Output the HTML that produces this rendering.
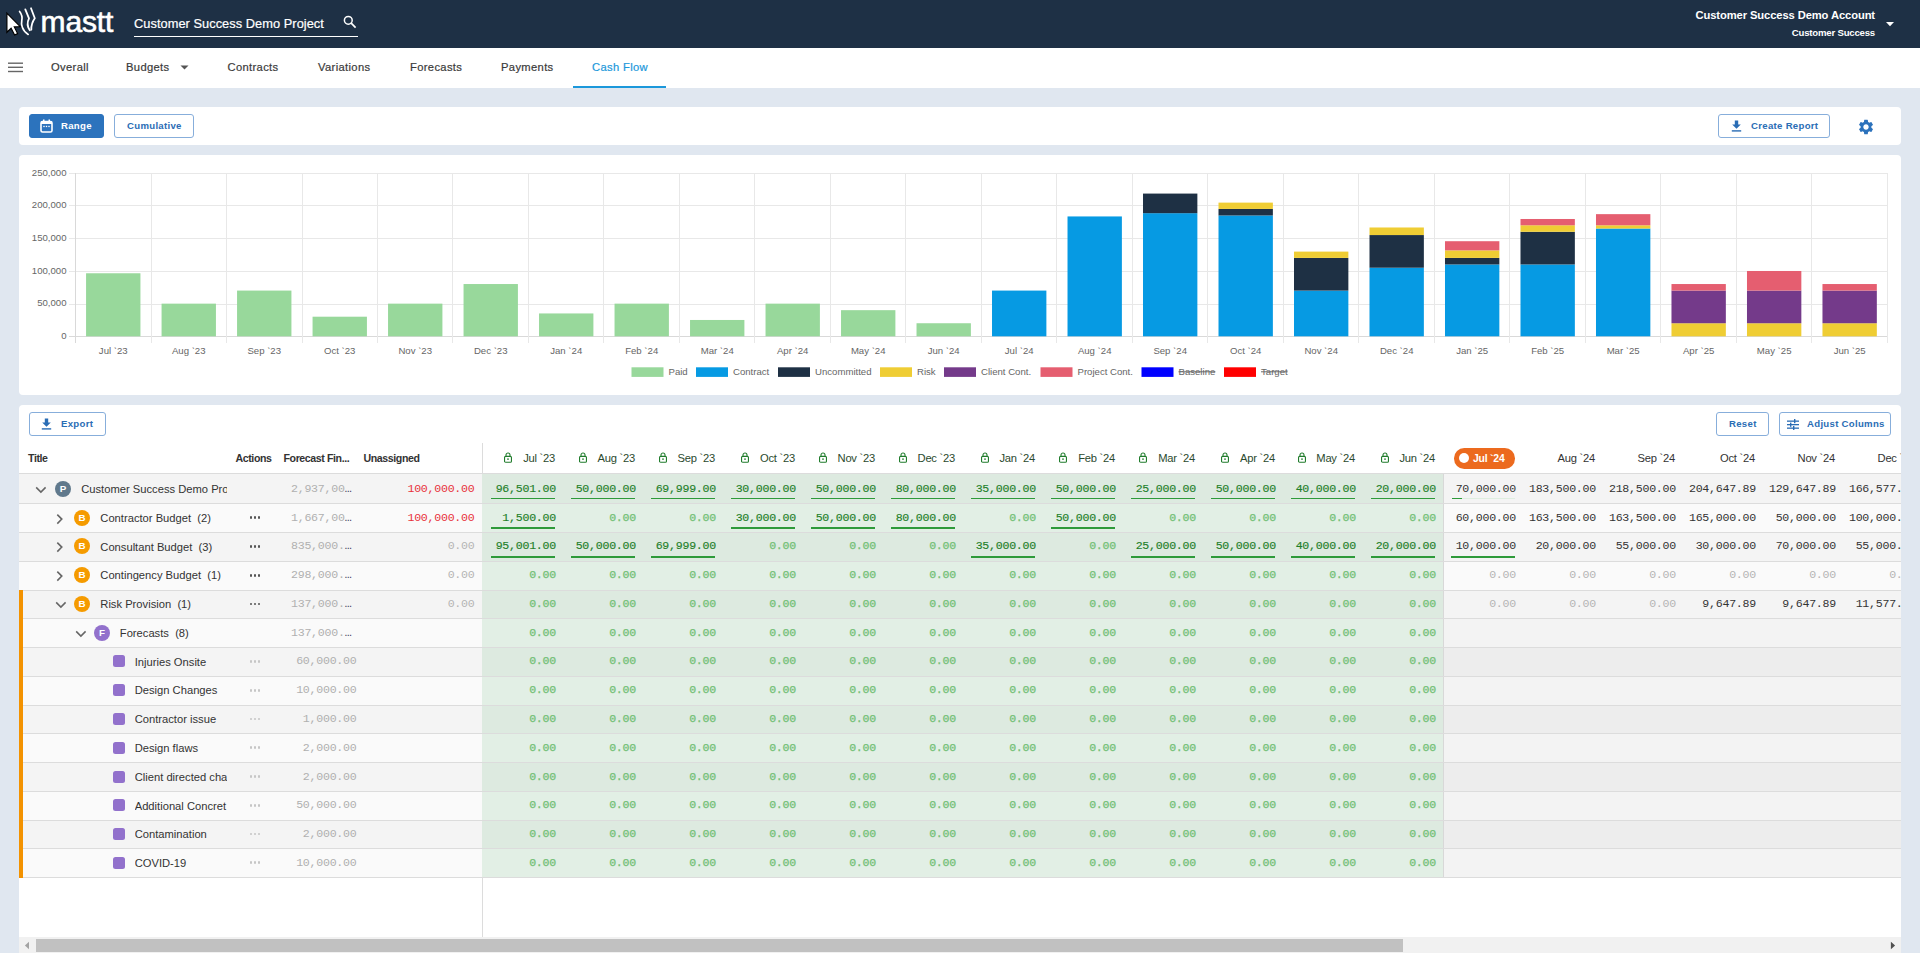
<!DOCTYPE html>
<html><head><meta charset="utf-8"><title>Cash Flow</title>
<style>
*{box-sizing:border-box;margin:0;padding:0}
html,body{width:1920px;height:953px;overflow:hidden}
body{background:#e0e7f0;font-family:"Liberation Sans",sans-serif;position:relative;color:#333}
.abs{position:absolute}
#top{position:absolute;left:0;top:0;width:1920px;height:48px;background:#1e3045;box-shadow:0 1px 1px rgba(0,0,0,.35)}
#logo{position:absolute;left:40.5px;top:4px;font-size:30px;font-weight:normal;color:#fff;letter-spacing:-0.1px;line-height:36px;-webkit-text-stroke:0.6px #fff}
#proj{position:absolute;left:134px;top:15.5px;font-size:12.8px;color:#fff;letter-spacing:0.05px;line-height:16px;-webkit-text-stroke:0.2px #fff}
#projline{position:absolute;left:134px;top:36px;width:224px;height:1px;background:#fff}
#acct1{position:absolute;right:45px;top:8px;font-size:11.2px;font-weight:bold;color:#fff;line-height:14px;letter-spacing:-0.1px}
#acct2{position:absolute;right:45px;top:27px;font-size:9.6px;font-weight:bold;color:#fff;line-height:12px;letter-spacing:-0.2px}
#nav{position:absolute;left:0;top:48px;width:1920px;height:40px;background:#fff}
.tab{position:absolute;top:10.8px;font-size:11.2px;color:#3a3a3a;line-height:16px;letter-spacing:0.35px;-webkit-text-stroke:0.2px #3a3a3a}
.tab.act{-webkit-text-stroke:0.2px #1c98db}
.tab.act{color:#1c98db}
#uline{position:absolute;left:573px;top:38px;width:93px;height:2px;background:#1c98db}
.card{position:absolute;left:19px;width:1882px;background:#fff;border-radius:4px}
.btn{position:absolute;height:24px;border:1px solid #87aedb;border-radius:3px;color:#2a6db5;font-size:9.6px;font-weight:bold;line-height:21.5px;background:#fff;letter-spacing:0.3px}
.btn.pri{background:#2c73bd;border-color:#2c73bd;color:#fff}
.ax{font-family:"Liberation Sans",sans-serif;font-size:9.6px;fill:#666}
/* table */
.r{position:absolute;left:19px;width:1882px;border-bottom:1px solid #dcdcdc}
.r b.g{position:absolute;left:463px;top:0;width:962px;bottom:0;background:rgba(46,160,67,0.115);border-right:1px solid #d8d8d8}
.r.odd{background:#f4f4f4}
.r.even{background:#fafafa}
.r b.ov{position:absolute;left:1425px;top:0;right:0;bottom:0;background:rgba(0,0,0,0.027)}
.obar{position:absolute;left:19px;width:4px;background:#f39200}
.circ{position:absolute;width:16px;height:16px;border-radius:50%;color:#fff;font-size:9.8px;font-weight:bold;text-align:center;line-height:16px}
.sq{position:absolute;width:12px;height:12px;border-radius:2.5px;background:#9271cc}
.a{position:absolute}
.tt{position:absolute;font-size:11.2px;line-height:14px;color:#333;white-space:nowrap;width:146px;overflow:hidden}
.dots{position:absolute;left:249.5px;width:12px;height:3px}
.dots i{position:absolute;top:0;width:2.6px;height:2.6px;border-radius:50%}
.dots i:nth-child(1){left:0}.dots i:nth-child(2){left:4px}.dots i:nth-child(3){left:8px}
.num{position:absolute;font-family:"Liberation Mono",monospace;font-size:11.6px;letter-spacing:-0.25px;line-height:14px;white-space:nowrap;text-align:right}
.fc{left:276px;width:80.5px;color:#b0b0b0}
.el{color:#3a3a5a}
.fc.tr{text-align:left;left:291px}
.un{left:379.5px;width:95px}
.pv{width:80px;padding-right:7px;color:#1f7f2a;-webkit-text-stroke:0.15px #1f7f2a}
.pv.z{color:#72c076;-webkit-text-stroke:0.25px #72c076}
.ul{position:absolute;width:64px;background:#2e9a3a}
.fv{width:80px;padding-right:7px;color:#333;}
.fv.z{color:#b5b5b5}
.fv b{position:absolute;left:8px;right:8px;top:15.3px;height:1.8px;background:#2e9a3a}
.fv b.prog{background:#e0ece1;height:1.5px}
.fv b.prog2{right:auto;width:10px;background:#2e9a3a;height:1.5px}
#tbl{position:absolute;left:0;top:0;width:1901px;height:953px;overflow:hidden}
.th{position:absolute;top:451px;font-size:10.6px;font-weight:bold;color:#333;line-height:14px;letter-spacing:-0.4px}
.mh{position:absolute;top:450px;width:80px;height:16px;font-size:11.2px;color:#2b4a2e;line-height:14px;text-align:right;padding-right:8px;letter-spacing:-0.25px}
.mh.fut{color:#333}
.mh .lock{position:relative;top:2px;vertical-align:top}
.mh span{position:relative;top:1px}
</style></head><body>
<div id="top">
  <svg class="abs" style="left:0;top:0" width="40" height="48" viewBox="0 0 40 48">
    <path d="M19.6 11.4 C21.6 14 22.6 17 21.8 20.5 C21 24 21.8 30.5 28.2 34.4" fill="none" stroke="#fff" stroke-width="1.7" stroke-linecap="round"/>
    <path d="M25.3 9.4 L29 18.3 C27.2 22 26.8 26 29.8 30.3" fill="none" stroke="#fff" stroke-width="1.8" stroke-linecap="round" stroke-linejoin="round"/>
    <path d="M31 8.3 L34.8 18.3 C32.6 21.5 31.2 25 31.3 29.7" fill="none" stroke="#fff" stroke-width="1.8" stroke-linecap="round" stroke-linejoin="round"/>
    <path d="M6.9 13.2 L6.9 32.3 L11.1 28.3 L14.6 35 L17.6 33.6 L14.3 26.9 L20.2 26.6 Z" fill="#fff" stroke="#000" stroke-width="1.2" stroke-linejoin="miter"/>
  </svg>
  <div id="logo">mastt</div>
  <div id="proj">Customer Success Demo Project</div>
  <svg class="abs" style="left:343px;top:15px" width="14" height="14" viewBox="0 0 14 14"><circle cx="5.3" cy="5.3" r="3.9" fill="none" stroke="#fff" stroke-width="1.5"/><path d="M8.2 8.2 L12.6 12.6" stroke="#fff" stroke-width="1.7"/></svg>
  <div id="projline"></div>
  <div id="acct1">Customer Success Demo Account</div>
  <div id="acct2">Customer Success</div>
  <svg class="abs" style="left:1885px;top:21px" width="10" height="6" viewBox="0 0 10 6"><path d="M1 1 L9 1 L5 5.2 Z" fill="#fff"/></svg>
</div>
<div id="nav">
  <svg class="abs" style="left:8px;top:14px" width="15" height="11" viewBox="0 0 15 11"><rect x="0" y="0.5" width="15" height="1.4" fill="#666"/><rect x="0" y="4.6" width="15" height="1.4" fill="#666"/><rect x="0" y="8.8" width="15" height="1.4" fill="#666"/></svg>
  <div class="tab" style="left:51px">Overall</div>
  <div class="tab" style="left:126px">Budgets</div>
  <svg class="abs" style="left:180px;top:17px" width="9" height="5" viewBox="0 0 9 5"><path d="M0.5 0.5 L8.5 0.5 L4.5 4.5 Z" fill="#555"/></svg>
  <div class="tab" style="left:227.5px">Contracts</div>
  <div class="tab" style="left:318px">Variations</div>
  <div class="tab" style="left:410px">Forecasts</div>
  <div class="tab" style="left:501px">Payments</div>
  <div class="tab act" style="left:592px">Cash Flow</div>
  <div id="uline"></div>
</div>

<!-- card 1 -->
<div class="card" style="top:107px;height:38px"></div>
<div class="btn pri" style="left:29px;top:114px;width:75px">
  <svg class="abs" style="left:10px;top:4px" width="13" height="14" viewBox="0 0 13 14"><rect x="1" y="2.5" width="11" height="10.5" rx="1.5" fill="none" stroke="#fff" stroke-width="1.6"/><rect x="1" y="2.5" width="11" height="2.5" fill="#fff"/><rect x="3" y="0.5" width="1.5" height="2.5" fill="#fff"/><rect x="8.5" y="0.5" width="1.5" height="2.5" fill="#fff"/><rect x="3.3" y="6.8" width="1.4" height="1.3" fill="#fff"/><rect x="5.8" y="6.8" width="1.4" height="1.3" fill="#fff"/><rect x="8.3" y="6.8" width="1.4" height="1.3" fill="#fff"/></svg>
  <span class="abs" style="left:31px;top:0">Range</span>
</div>
<div class="btn" style="left:114px;top:114px;width:80px"><span class="abs" style="left:12px;top:0">Cumulative</span></div>
<div class="btn" style="left:1718px;top:114px;width:112px">
  <svg class="abs" style="left:12px;top:5px" width="11" height="12" viewBox="0 0 11 12"><path d="M3.8 0.5 H7.2 V4.5 H9.8 L5.5 8.8 L1.2 4.5 H3.8 Z" fill="#2a6db5"/><rect x="0.8" y="10.2" width="9.4" height="1.4" fill="#2a6db5"/></svg>
  <span class="abs" style="left:32px;top:0">Create Report</span>
</div>
<svg class="abs" style="left:1856.5px;top:117.5px" width="18" height="18" viewBox="0 0 24 24"><path fill="#2c72bc" d="M19.14 12.94c.04-.3.06-.61.06-.94 0-.32-.02-.64-.07-.94l2.03-1.58a.49.49 0 0 0 .12-.61l-1.92-3.32a.488.488 0 0 0-.59-.22l-2.39.96c-.5-.38-1.03-.7-1.62-.94l-.36-2.54a.484.484 0 0 0-.48-.41h-3.84c-.24 0-.43.17-.47.41l-.36 2.54c-.59.24-1.13.57-1.62.94l-2.39-.96c-.22-.08-.47 0-.59.22L2.74 8.87c-.12.21-.08.47.12.61l2.03 1.58c-.05.3-.09.63-.09.94s.02.64.07.94l-2.03 1.58a.49.49 0 0 0-.12.61l1.92 3.32c.12.22.37.29.59.22l2.39-.96c.5.38 1.03.7 1.62.94l.36 2.54c.05.24.24.41.48.41h3.84c.24 0 .44-.17.47-.41l.36-2.54c.59-.24 1.13-.56 1.62-.94l2.39.96c.22.08.47 0 .59-.22l1.92-3.32c.12-.22.07-.47-.12-.61l-2.01-1.58zM12 15.6c-1.98 0-3.6-1.62-3.6-3.6s1.62-3.6 3.6-3.6 3.6 1.62 3.6 3.6-1.62 3.6-3.6 3.6z"/></svg>

<!-- card 2 chart -->
<div class="card" style="top:155px;height:240px"></div>
<svg class="abs" style="left:0;top:0" width="1920" height="400" viewBox="0 0 1920 400">
<line x1="69" y1="336.5" x2="1887.5" y2="336.5" stroke="#d9d9d9" stroke-width="1"/>
<text x="66.5" y="338.9" text-anchor="end" class="ax">0</text>
<line x1="69" y1="304.5" x2="1887.5" y2="304.5" stroke="#e8e8e8" stroke-width="1"/>
<text x="66.5" y="306.2" text-anchor="end" class="ax">50,000</text>
<line x1="69" y1="271.5" x2="1887.5" y2="271.5" stroke="#e8e8e8" stroke-width="1"/>
<text x="66.5" y="273.6" text-anchor="end" class="ax">100,000</text>
<line x1="69" y1="238.5" x2="1887.5" y2="238.5" stroke="#e8e8e8" stroke-width="1"/>
<text x="66.5" y="240.9" text-anchor="end" class="ax">150,000</text>
<line x1="69" y1="205.5" x2="1887.5" y2="205.5" stroke="#e8e8e8" stroke-width="1"/>
<text x="66.5" y="208.3" text-anchor="end" class="ax">200,000</text>
<line x1="69" y1="173.5" x2="1887.5" y2="173.5" stroke="#e8e8e8" stroke-width="1"/>
<text x="66.5" y="175.6" text-anchor="end" class="ax">250,000</text>
<line x1="75.5" y1="173" x2="75.5" y2="343" stroke="#d9d9d9" stroke-width="1"/>
<line x1="151.5" y1="173" x2="151.5" y2="343" stroke="#e8e8e8" stroke-width="1"/>
<line x1="226.5" y1="173" x2="226.5" y2="343" stroke="#e8e8e8" stroke-width="1"/>
<line x1="302.5" y1="173" x2="302.5" y2="343" stroke="#e8e8e8" stroke-width="1"/>
<line x1="377.5" y1="173" x2="377.5" y2="343" stroke="#e8e8e8" stroke-width="1"/>
<line x1="452.5" y1="173" x2="452.5" y2="343" stroke="#e8e8e8" stroke-width="1"/>
<line x1="528.5" y1="173" x2="528.5" y2="343" stroke="#e8e8e8" stroke-width="1"/>
<line x1="603.5" y1="173" x2="603.5" y2="343" stroke="#e8e8e8" stroke-width="1"/>
<line x1="679.5" y1="173" x2="679.5" y2="343" stroke="#e8e8e8" stroke-width="1"/>
<line x1="754.5" y1="173" x2="754.5" y2="343" stroke="#e8e8e8" stroke-width="1"/>
<line x1="830.5" y1="173" x2="830.5" y2="343" stroke="#e8e8e8" stroke-width="1"/>
<line x1="905.5" y1="173" x2="905.5" y2="343" stroke="#e8e8e8" stroke-width="1"/>
<line x1="981.5" y1="173" x2="981.5" y2="343" stroke="#e8e8e8" stroke-width="1"/>
<line x1="1056.5" y1="173" x2="1056.5" y2="343" stroke="#e8e8e8" stroke-width="1"/>
<line x1="1132.5" y1="173" x2="1132.5" y2="343" stroke="#e8e8e8" stroke-width="1"/>
<line x1="1207.5" y1="173" x2="1207.5" y2="343" stroke="#e8e8e8" stroke-width="1"/>
<line x1="1283.5" y1="173" x2="1283.5" y2="343" stroke="#e8e8e8" stroke-width="1"/>
<line x1="1358.5" y1="173" x2="1358.5" y2="343" stroke="#e8e8e8" stroke-width="1"/>
<line x1="1434.5" y1="173" x2="1434.5" y2="343" stroke="#e8e8e8" stroke-width="1"/>
<line x1="1509.5" y1="173" x2="1509.5" y2="343" stroke="#e8e8e8" stroke-width="1"/>
<line x1="1585.5" y1="173" x2="1585.5" y2="343" stroke="#e8e8e8" stroke-width="1"/>
<line x1="1660.5" y1="173" x2="1660.5" y2="343" stroke="#e8e8e8" stroke-width="1"/>
<line x1="1736.5" y1="173" x2="1736.5" y2="343" stroke="#e8e8e8" stroke-width="1"/>
<line x1="1811.5" y1="173" x2="1811.5" y2="343" stroke="#e8e8e8" stroke-width="1"/>
<line x1="1887.5" y1="173" x2="1887.5" y2="343" stroke="#e8e8e8" stroke-width="1"/>
<rect x="86.07" y="273.27" width="54.36" height="63.03" fill="#98d89b"/>
<text x="113.25" y="354" text-anchor="middle" class="ax">Jul ˋ23</text>
<rect x="161.57" y="303.64" width="54.36" height="32.66" fill="#98d89b"/>
<text x="188.74" y="354" text-anchor="middle" class="ax">Aug ˋ23</text>
<rect x="237.06" y="290.58" width="54.36" height="45.72" fill="#98d89b"/>
<text x="264.24" y="354" text-anchor="middle" class="ax">Sep ˋ23</text>
<rect x="312.56" y="316.70" width="54.36" height="19.60" fill="#98d89b"/>
<text x="339.74" y="354" text-anchor="middle" class="ax">Oct ˋ23</text>
<rect x="388.05" y="303.64" width="54.36" height="32.66" fill="#98d89b"/>
<text x="415.23" y="354" text-anchor="middle" class="ax">Nov ˋ23</text>
<rect x="463.55" y="284.04" width="54.36" height="52.26" fill="#98d89b"/>
<text x="490.73" y="354" text-anchor="middle" class="ax">Dec ˋ23</text>
<rect x="539.04" y="313.44" width="54.36" height="22.86" fill="#98d89b"/>
<text x="566.22" y="354" text-anchor="middle" class="ax">Jan ˋ24</text>
<rect x="614.54" y="303.64" width="54.36" height="32.66" fill="#98d89b"/>
<text x="641.72" y="354" text-anchor="middle" class="ax">Feb ˋ24</text>
<rect x="690.04" y="319.97" width="54.36" height="16.33" fill="#98d89b"/>
<text x="717.21" y="354" text-anchor="middle" class="ax">Mar ˋ24</text>
<rect x="765.53" y="303.64" width="54.36" height="32.66" fill="#98d89b"/>
<text x="792.71" y="354" text-anchor="middle" class="ax">Apr ˋ24</text>
<rect x="841.03" y="310.17" width="54.36" height="26.13" fill="#98d89b"/>
<text x="868.21" y="354" text-anchor="middle" class="ax">May ˋ24</text>
<rect x="916.52" y="323.24" width="54.36" height="13.06" fill="#98d89b"/>
<text x="943.70" y="354" text-anchor="middle" class="ax">Jun ˋ24</text>
<rect x="992.02" y="290.58" width="54.36" height="45.72" fill="#069ae3"/>
<text x="1019.20" y="354" text-anchor="middle" class="ax">Jul ˋ24</text>
<rect x="1067.52" y="216.44" width="54.36" height="119.86" fill="#069ae3"/>
<text x="1094.69" y="354" text-anchor="middle" class="ax">Aug ˋ24</text>
<rect x="1143.01" y="213.17" width="54.36" height="123.13" fill="#069ae3"/>
<rect x="1143.01" y="193.58" width="54.36" height="19.60" fill="#1e3044"/>
<text x="1170.19" y="354" text-anchor="middle" class="ax">Sep ˋ24</text>
<rect x="1218.51" y="215.46" width="54.36" height="120.84" fill="#069ae3"/>
<rect x="1218.51" y="208.93" width="54.36" height="6.53" fill="#1e3044"/>
<rect x="1218.51" y="202.62" width="54.36" height="6.30" fill="#efcd34"/>
<text x="1245.69" y="354" text-anchor="middle" class="ax">Oct ˋ24</text>
<rect x="1294.00" y="290.58" width="54.36" height="45.72" fill="#069ae3"/>
<rect x="1294.00" y="257.92" width="54.36" height="32.66" fill="#1e3044"/>
<rect x="1294.00" y="251.61" width="54.36" height="6.30" fill="#efcd34"/>
<text x="1321.18" y="354" text-anchor="middle" class="ax">Nov ˋ24</text>
<rect x="1369.50" y="267.71" width="54.36" height="68.59" fill="#069ae3"/>
<rect x="1369.50" y="235.05" width="54.36" height="32.66" fill="#1e3044"/>
<rect x="1369.50" y="227.49" width="54.36" height="7.56" fill="#efcd34"/>
<text x="1396.68" y="354" text-anchor="middle" class="ax">Dec ˋ24</text>
<rect x="1444.99" y="264.45" width="54.36" height="71.85" fill="#069ae3"/>
<rect x="1444.99" y="257.92" width="54.36" height="6.53" fill="#1e3044"/>
<rect x="1444.99" y="250.35" width="54.36" height="7.56" fill="#efcd34"/>
<rect x="1444.99" y="241.21" width="54.36" height="9.14" fill="#e55e70"/>
<text x="1472.17" y="354" text-anchor="middle" class="ax">Jan ˋ25</text>
<rect x="1520.49" y="264.45" width="54.36" height="71.85" fill="#069ae3"/>
<rect x="1520.49" y="231.79" width="54.36" height="32.66" fill="#1e3044"/>
<rect x="1520.49" y="225.26" width="54.36" height="6.53" fill="#efcd34"/>
<rect x="1520.49" y="218.99" width="54.36" height="6.27" fill="#e55e70"/>
<text x="1547.67" y="354" text-anchor="middle" class="ax">Feb ˋ25</text>
<rect x="1595.99" y="228.52" width="54.36" height="107.78" fill="#069ae3"/>
<rect x="1595.99" y="225.26" width="54.36" height="3.27" fill="#efcd34"/>
<rect x="1595.99" y="214.15" width="54.36" height="11.10" fill="#e55e70"/>
<text x="1623.16" y="354" text-anchor="middle" class="ax">Mar ˋ25</text>
<rect x="1671.48" y="323.24" width="54.36" height="13.06" fill="#efcd34"/>
<rect x="1671.48" y="290.58" width="54.36" height="32.66" fill="#743a8a"/>
<rect x="1671.48" y="284.04" width="54.36" height="6.53" fill="#e55e70"/>
<text x="1698.66" y="354" text-anchor="middle" class="ax">Apr ˋ25</text>
<rect x="1746.98" y="323.24" width="54.36" height="13.06" fill="#efcd34"/>
<rect x="1746.98" y="290.58" width="54.36" height="32.66" fill="#743a8a"/>
<rect x="1746.98" y="270.98" width="54.36" height="19.60" fill="#e55e70"/>
<text x="1774.16" y="354" text-anchor="middle" class="ax">May ˋ25</text>
<rect x="1822.47" y="323.24" width="54.36" height="13.06" fill="#efcd34"/>
<rect x="1822.47" y="290.58" width="54.36" height="32.66" fill="#743a8a"/>
<rect x="1822.47" y="284.04" width="54.36" height="6.53" fill="#e55e70"/>
<text x="1849.65" y="354" text-anchor="middle" class="ax">Jun ˋ25</text>
<rect x="631.5" y="367.3" width="32" height="9.6" fill="#98d89b"/>
<text x="668.5" y="374.8" class="ax">Paid</text>
<rect x="696" y="367.3" width="32" height="9.6" fill="#069ae3"/>
<text x="733" y="374.8" class="ax">Contract</text>
<rect x="778" y="367.3" width="32" height="9.6" fill="#1e3044"/>
<text x="815" y="374.8" class="ax">Uncommitted</text>
<rect x="880" y="367.3" width="32" height="9.6" fill="#efcd34"/>
<text x="917" y="374.8" class="ax">Risk</text>
<rect x="944" y="367.3" width="32" height="9.6" fill="#743a8a"/>
<text x="981" y="374.8" class="ax">Client Cont.</text>
<rect x="1040.5" y="367.3" width="32" height="9.6" fill="#e55e70"/>
<text x="1077.5" y="374.8" class="ax">Project Cont.</text>
<rect x="1141.5" y="367.3" width="32" height="9.6" fill="#0000ff"/>
<text x="1178.5" y="374.8" class="ax" text-decoration="line-through">Baseline</text>
<rect x="1224" y="367.3" width="32" height="9.6" fill="#ff0000"/>
<text x="1261" y="374.8" class="ax" text-decoration="line-through">Target</text>
</svg>

<!-- card 3 table -->
<div class="card" style="top:405px;height:560px;overflow:hidden"></div>
<div class="btn" style="left:29px;top:412px;width:77px">
  <svg class="abs" style="left:11px;top:5px" width="11" height="12" viewBox="0 0 11 12"><path d="M3.8 0.5 H7.2 V4.5 H9.8 L5.5 8.8 L1.2 4.5 H3.8 Z" fill="#2a6db5"/><rect x="0.8" y="10.2" width="9.4" height="1.4" fill="#2a6db5"/></svg>
  <span class="abs" style="left:31px;top:0">Export</span>
</div>
<div class="btn" style="left:1716px;top:412px;width:53px"><span class="abs" style="left:12px;top:0">Reset</span></div>
<div class="btn" style="left:1779px;top:412px;width:112px">
  <svg class="abs" style="left:7px;top:6px" width="12" height="11" viewBox="0 0 12 11"><rect x="0" y="1.5" width="12" height="1.3" fill="#2a6db5"/><rect x="0" y="5" width="12" height="1.3" fill="#2a6db5"/><rect x="0" y="8.5" width="12" height="1.3" fill="#2a6db5"/><rect x="7" y="0" width="1.4" height="4.2" fill="#2a6db5"/><rect x="3" y="3.6" width="1.4" height="4.2" fill="#2a6db5"/><rect x="6" y="7" width="1.4" height="4" fill="#2a6db5"/></svg>
  <span class="abs" style="left:27px;top:0">Adjust Columns</span>
</div>
<div id="tbl">
<div class="th" style="left:28px">Title</div>
<div class="th" style="left:235.5px">Actions</div>
<div class="th" style="left:283.5px">Forecast Fin...</div>
<div class="th" style="left:363.5px">Unassigned</div>
<div class="abs" style="left:19px;top:473px;width:1882px;height:1px;background:#dcdcdc"></div>
<div class="abs" style="left:482px;top:443px;width:1px;height:494px;background:#dcdcdc"></div>
<div class="mh" style="left:483px"><svg class="lock" width="8" height="11" viewBox="0 0 8 11" style="margin-right:10.8px"><path d="M2 4.3 V3 a2 2 0 0 1 4 0 V4.3" fill="none" stroke="#1f7b2b" stroke-width="1.05"/><rect x="0.55" y="4.35" width="6.9" height="5.9" rx="1.1" fill="none" stroke="#1f7b2b" stroke-width="1.1"/><circle cx="4" cy="7.1" r="0.85" fill="#1f7b2b"/></svg><span>Jul `23</span></div>
<div class="mh" style="left:563px"><svg class="lock" width="8" height="11" viewBox="0 0 8 11" style="margin-right:10.8px"><path d="M2 4.3 V3 a2 2 0 0 1 4 0 V4.3" fill="none" stroke="#1f7b2b" stroke-width="1.05"/><rect x="0.55" y="4.35" width="6.9" height="5.9" rx="1.1" fill="none" stroke="#1f7b2b" stroke-width="1.1"/><circle cx="4" cy="7.1" r="0.85" fill="#1f7b2b"/></svg><span>Aug `23</span></div>
<div class="mh" style="left:643px"><svg class="lock" width="8" height="11" viewBox="0 0 8 11" style="margin-right:10.8px"><path d="M2 4.3 V3 a2 2 0 0 1 4 0 V4.3" fill="none" stroke="#1f7b2b" stroke-width="1.05"/><rect x="0.55" y="4.35" width="6.9" height="5.9" rx="1.1" fill="none" stroke="#1f7b2b" stroke-width="1.1"/><circle cx="4" cy="7.1" r="0.85" fill="#1f7b2b"/></svg><span>Sep `23</span></div>
<div class="mh" style="left:723px"><svg class="lock" width="8" height="11" viewBox="0 0 8 11" style="margin-right:10.8px"><path d="M2 4.3 V3 a2 2 0 0 1 4 0 V4.3" fill="none" stroke="#1f7b2b" stroke-width="1.05"/><rect x="0.55" y="4.35" width="6.9" height="5.9" rx="1.1" fill="none" stroke="#1f7b2b" stroke-width="1.1"/><circle cx="4" cy="7.1" r="0.85" fill="#1f7b2b"/></svg><span>Oct `23</span></div>
<div class="mh" style="left:803px"><svg class="lock" width="8" height="11" viewBox="0 0 8 11" style="margin-right:10.8px"><path d="M2 4.3 V3 a2 2 0 0 1 4 0 V4.3" fill="none" stroke="#1f7b2b" stroke-width="1.05"/><rect x="0.55" y="4.35" width="6.9" height="5.9" rx="1.1" fill="none" stroke="#1f7b2b" stroke-width="1.1"/><circle cx="4" cy="7.1" r="0.85" fill="#1f7b2b"/></svg><span>Nov `23</span></div>
<div class="mh" style="left:883px"><svg class="lock" width="8" height="11" viewBox="0 0 8 11" style="margin-right:10.8px"><path d="M2 4.3 V3 a2 2 0 0 1 4 0 V4.3" fill="none" stroke="#1f7b2b" stroke-width="1.05"/><rect x="0.55" y="4.35" width="6.9" height="5.9" rx="1.1" fill="none" stroke="#1f7b2b" stroke-width="1.1"/><circle cx="4" cy="7.1" r="0.85" fill="#1f7b2b"/></svg><span>Dec `23</span></div>
<div class="mh" style="left:963px"><svg class="lock" width="8" height="11" viewBox="0 0 8 11" style="margin-right:10.8px"><path d="M2 4.3 V3 a2 2 0 0 1 4 0 V4.3" fill="none" stroke="#1f7b2b" stroke-width="1.05"/><rect x="0.55" y="4.35" width="6.9" height="5.9" rx="1.1" fill="none" stroke="#1f7b2b" stroke-width="1.1"/><circle cx="4" cy="7.1" r="0.85" fill="#1f7b2b"/></svg><span>Jan `24</span></div>
<div class="mh" style="left:1043px"><svg class="lock" width="8" height="11" viewBox="0 0 8 11" style="margin-right:10.8px"><path d="M2 4.3 V3 a2 2 0 0 1 4 0 V4.3" fill="none" stroke="#1f7b2b" stroke-width="1.05"/><rect x="0.55" y="4.35" width="6.9" height="5.9" rx="1.1" fill="none" stroke="#1f7b2b" stroke-width="1.1"/><circle cx="4" cy="7.1" r="0.85" fill="#1f7b2b"/></svg><span>Feb `24</span></div>
<div class="mh" style="left:1123px"><svg class="lock" width="8" height="11" viewBox="0 0 8 11" style="margin-right:10.8px"><path d="M2 4.3 V3 a2 2 0 0 1 4 0 V4.3" fill="none" stroke="#1f7b2b" stroke-width="1.05"/><rect x="0.55" y="4.35" width="6.9" height="5.9" rx="1.1" fill="none" stroke="#1f7b2b" stroke-width="1.1"/><circle cx="4" cy="7.1" r="0.85" fill="#1f7b2b"/></svg><span>Mar `24</span></div>
<div class="mh" style="left:1203px"><svg class="lock" width="8" height="11" viewBox="0 0 8 11" style="margin-right:10.8px"><path d="M2 4.3 V3 a2 2 0 0 1 4 0 V4.3" fill="none" stroke="#1f7b2b" stroke-width="1.05"/><rect x="0.55" y="4.35" width="6.9" height="5.9" rx="1.1" fill="none" stroke="#1f7b2b" stroke-width="1.1"/><circle cx="4" cy="7.1" r="0.85" fill="#1f7b2b"/></svg><span>Apr `24</span></div>
<div class="mh" style="left:1283px"><svg class="lock" width="8" height="11" viewBox="0 0 8 11" style="margin-right:10.8px"><path d="M2 4.3 V3 a2 2 0 0 1 4 0 V4.3" fill="none" stroke="#1f7b2b" stroke-width="1.05"/><rect x="0.55" y="4.35" width="6.9" height="5.9" rx="1.1" fill="none" stroke="#1f7b2b" stroke-width="1.1"/><circle cx="4" cy="7.1" r="0.85" fill="#1f7b2b"/></svg><span>May `24</span></div>
<div class="mh" style="left:1363px"><svg class="lock" width="8" height="11" viewBox="0 0 8 11" style="margin-right:10.8px"><path d="M2 4.3 V3 a2 2 0 0 1 4 0 V4.3" fill="none" stroke="#1f7b2b" stroke-width="1.05"/><rect x="0.55" y="4.35" width="6.9" height="5.9" rx="1.1" fill="none" stroke="#1f7b2b" stroke-width="1.1"/><circle cx="4" cy="7.1" r="0.85" fill="#1f7b2b"/></svg><span>Jun `24</span></div>
<div class="mh fut" style="left:1523px"><span>Aug `24</span></div>
<div class="mh fut" style="left:1603px"><span>Sep `24</span></div>
<div class="mh fut" style="left:1683px"><span>Oct `24</span></div>
<div class="mh fut" style="left:1763px"><span>Nov `24</span></div>
<div class="mh fut" style="left:1843px"><span>Dec `24</span></div>
<div class="abs" style="left:1453.5px;top:448.2px;width:61px;height:20.4px;border-radius:10.2px;background:#ec6a1e">
  <div class="abs" style="left:5.5px;top:5.2px;width:10px;height:10px;border-radius:50%;background:#fff"></div>
  <span class="abs" style="left:19.5px;top:3.5px;font-size:10.4px;font-weight:bold;color:#fff;line-height:14px;letter-spacing:-0.2px">Jul `24</span>
</div>
<div class="r odd" style="top:474.00px;height:30.25px"><b class="g"></b></div>
<svg class="a" style="left:34.0px;top:485.25px" width="14" height="10" viewBox="0 0 14 10"><path d="M2.2 2.4 L6.9 7.1 L11.6 2.4" fill="none" stroke="#666" stroke-width="1.55"/></svg>
<div class="circ" style="left:55.0px;top:480.95px;background:#60798c">P</div>
<div class="tt" style="left:81.2px;top:482.17px;width:146.1px">Customer Success Demo Pro</div>
<div class="num fc tr" style="top:481.95px">2,937,00<span class="el">…</span></div>
<div class="num un" style="top:481.95px;color:#e8323c">100,000.00</div>
<div class="num pv" style="left:483px;top:481.95px">96,501.00</div><div class="ul" style="left:491px;top:498px;height:1px"></div>
<div class="num pv" style="left:563px;top:481.95px">50,000.00</div><div class="ul" style="left:571px;top:498px;height:1px"></div>
<div class="num pv" style="left:643px;top:481.95px">69,999.00</div><div class="ul" style="left:651px;top:498px;height:1px"></div>
<div class="num pv" style="left:723px;top:481.95px">30,000.00</div><div class="ul" style="left:731px;top:498px;height:1px"></div>
<div class="num pv" style="left:803px;top:481.95px">50,000.00</div><div class="ul" style="left:811px;top:498px;height:1px"></div>
<div class="num pv" style="left:883px;top:481.95px">80,000.00</div><div class="ul" style="left:891px;top:498px;height:1px"></div>
<div class="num pv" style="left:963px;top:481.95px">35,000.00</div><div class="ul" style="left:971px;top:498px;height:1px"></div>
<div class="num pv" style="left:1043px;top:481.95px">50,000.00</div><div class="ul" style="left:1051px;top:498px;height:1px"></div>
<div class="num pv" style="left:1123px;top:481.95px">25,000.00</div><div class="ul" style="left:1131px;top:498px;height:1px"></div>
<div class="num pv" style="left:1203px;top:481.95px">50,000.00</div><div class="ul" style="left:1211px;top:498px;height:1px"></div>
<div class="num pv" style="left:1283px;top:481.95px">40,000.00</div><div class="ul" style="left:1291px;top:498px;height:1px"></div>
<div class="num pv" style="left:1363px;top:481.95px">20,000.00</div><div class="ul" style="left:1371px;top:498px;height:1px"></div>
<div class="ul" style="left:1452px;top:498px;height:1px;width:63px;background:#dfeee0"></div><div class="ul" style="left:1452px;top:498px;height:1px;width:10px"></div>
<div class="num fv" style="left:1443px;top:481.95px">70,000.00</div>
<div class="num fv" style="left:1523px;top:481.95px">183,500.00</div>
<div class="num fv" style="left:1603px;top:481.95px">218,500.00</div>
<div class="num fv" style="left:1683px;top:481.95px">204,647.89</div>
<div class="num fv" style="left:1763px;top:481.95px">129,647.89</div>
<div class="num fv" style="left:1843px;top:481.95px">166,577.89</div>
<div class="r even" style="top:504.25px;height:28.76px"><b class="g"></b></div>
<svg class="a" style="left:54.5px;top:512.51px" width="10" height="12" viewBox="0 0 10 12"><path d="M2.3 1.6 L6.8 6.1 L2.3 10.6" fill="none" stroke="#666" stroke-width="1.55"/></svg>
<div class="circ" style="left:74.0px;top:509.71px;background:#f59b00">B</div>
<div class="tt" style="left:100.3px;top:510.93px;width:127.0px">Contractor Budget&nbsp; (2)</div>
<div class="dots" style="top:516.41px"><i style="background:#555"></i><i style="background:#555"></i><i style="background:#555"></i></div>
<div class="num fc tr" style="top:510.71px">1,667,00<span class="el">…</span></div>
<div class="num un" style="top:510.71px;color:#e8323c">100,000.00</div>
<div class="num pv" style="left:483px;top:510.71px">1,500.00</div><div class="ul" style="left:491px;top:527px;height:2px"></div>
<div class="num pv z" style="left:563px;top:510.71px">0.00</div>
<div class="num pv z" style="left:643px;top:510.71px">0.00</div>
<div class="num pv" style="left:723px;top:510.71px">30,000.00</div><div class="ul" style="left:731px;top:527px;height:2px"></div>
<div class="num pv" style="left:803px;top:510.71px">50,000.00</div><div class="ul" style="left:811px;top:527px;height:2px"></div>
<div class="num pv" style="left:883px;top:510.71px">80,000.00</div><div class="ul" style="left:891px;top:527px;height:2px"></div>
<div class="num pv z" style="left:963px;top:510.71px">0.00</div>
<div class="num pv" style="left:1043px;top:510.71px">50,000.00</div><div class="ul" style="left:1051px;top:527px;height:2px"></div>
<div class="num pv z" style="left:1123px;top:510.71px">0.00</div>
<div class="num pv z" style="left:1203px;top:510.71px">0.00</div>
<div class="num pv z" style="left:1283px;top:510.71px">0.00</div>
<div class="num pv z" style="left:1363px;top:510.71px">0.00</div>
<div class="num fv" style="left:1443px;top:510.71px">60,000.00</div>
<div class="num fv" style="left:1523px;top:510.71px">163,500.00</div>
<div class="num fv" style="left:1603px;top:510.71px">163,500.00</div>
<div class="num fv" style="left:1683px;top:510.71px">165,000.00</div>
<div class="num fv" style="left:1763px;top:510.71px">50,000.00</div>
<div class="num fv" style="left:1843px;top:510.71px">100,000.00</div>
<div class="r odd" style="top:533.01px;height:28.76px"><b class="g"></b></div>
<svg class="a" style="left:54.5px;top:541.26px" width="10" height="12" viewBox="0 0 10 12"><path d="M2.3 1.6 L6.8 6.1 L2.3 10.6" fill="none" stroke="#666" stroke-width="1.55"/></svg>
<div class="circ" style="left:74.0px;top:538.46px;background:#f59b00">B</div>
<div class="tt" style="left:100.3px;top:539.68px;width:127.0px">Consultant Budget&nbsp; (3)</div>
<div class="dots" style="top:545.16px"><i style="background:#555"></i><i style="background:#555"></i><i style="background:#555"></i></div>
<div class="num fc tr" style="top:539.46px">835,000.<span class="el">…</span></div>
<div class="num un" style="top:539.46px;color:#b5b5b5">0.00</div>
<div class="num pv" style="left:483px;top:539.46px">95,001.00</div><div class="ul" style="left:491px;top:556px;height:2px"></div>
<div class="num pv" style="left:563px;top:539.46px">50,000.00</div><div class="ul" style="left:571px;top:556px;height:2px"></div>
<div class="num pv" style="left:643px;top:539.46px">69,999.00</div><div class="ul" style="left:651px;top:556px;height:2px"></div>
<div class="num pv z" style="left:723px;top:539.46px">0.00</div>
<div class="num pv z" style="left:803px;top:539.46px">0.00</div>
<div class="num pv z" style="left:883px;top:539.46px">0.00</div>
<div class="num pv" style="left:963px;top:539.46px">35,000.00</div><div class="ul" style="left:971px;top:556px;height:2px"></div>
<div class="num pv z" style="left:1043px;top:539.46px">0.00</div>
<div class="num pv" style="left:1123px;top:539.46px">25,000.00</div><div class="ul" style="left:1131px;top:556px;height:2px"></div>
<div class="num pv" style="left:1203px;top:539.46px">50,000.00</div><div class="ul" style="left:1211px;top:556px;height:2px"></div>
<div class="num pv" style="left:1283px;top:539.46px">40,000.00</div><div class="ul" style="left:1291px;top:556px;height:2px"></div>
<div class="num pv" style="left:1363px;top:539.46px">20,000.00</div><div class="ul" style="left:1371px;top:556px;height:2px"></div>
<div class="ul" style="left:1451px;top:556px;height:2px"></div>
<div class="num fv" style="left:1443px;top:539.46px">10,000.00</div>
<div class="num fv" style="left:1523px;top:539.46px">20,000.00</div>
<div class="num fv" style="left:1603px;top:539.46px">55,000.00</div>
<div class="num fv" style="left:1683px;top:539.46px">30,000.00</div>
<div class="num fv" style="left:1763px;top:539.46px">70,000.00</div>
<div class="num fv" style="left:1843px;top:539.46px">55,000.00</div>
<div class="r even" style="top:561.76px;height:28.76px"><b class="g"></b></div>
<svg class="a" style="left:54.5px;top:570.02px" width="10" height="12" viewBox="0 0 10 12"><path d="M2.3 1.6 L6.8 6.1 L2.3 10.6" fill="none" stroke="#666" stroke-width="1.55"/></svg>
<div class="circ" style="left:74.0px;top:567.22px;background:#f59b00">B</div>
<div class="tt" style="left:100.3px;top:568.44px;width:127.0px">Contingency Budget&nbsp; (1)</div>
<div class="dots" style="top:573.92px"><i style="background:#555"></i><i style="background:#555"></i><i style="background:#555"></i></div>
<div class="num fc tr" style="top:568.22px">298,000.<span class="el">…</span></div>
<div class="num un" style="top:568.22px;color:#b5b5b5">0.00</div>
<div class="num pv z" style="left:483px;top:568.22px">0.00</div>
<div class="num pv z" style="left:563px;top:568.22px">0.00</div>
<div class="num pv z" style="left:643px;top:568.22px">0.00</div>
<div class="num pv z" style="left:723px;top:568.22px">0.00</div>
<div class="num pv z" style="left:803px;top:568.22px">0.00</div>
<div class="num pv z" style="left:883px;top:568.22px">0.00</div>
<div class="num pv z" style="left:963px;top:568.22px">0.00</div>
<div class="num pv z" style="left:1043px;top:568.22px">0.00</div>
<div class="num pv z" style="left:1123px;top:568.22px">0.00</div>
<div class="num pv z" style="left:1203px;top:568.22px">0.00</div>
<div class="num pv z" style="left:1283px;top:568.22px">0.00</div>
<div class="num pv z" style="left:1363px;top:568.22px">0.00</div>
<div class="num fv z" style="left:1443px;top:568.22px">0.00</div>
<div class="num fv z" style="left:1523px;top:568.22px">0.00</div>
<div class="num fv z" style="left:1603px;top:568.22px">0.00</div>
<div class="num fv z" style="left:1683px;top:568.22px">0.00</div>
<div class="num fv z" style="left:1763px;top:568.22px">0.00</div>
<div class="num fv z" style="left:1843px;top:568.22px">0.00</div>
<div class="r odd" style="top:590.52px;height:28.76px"><b class="g"></b></div>
<div class="obar" style="top:589.52px;height:29.76px"></div>
<svg class="a" style="left:54.0px;top:600.28px" width="14" height="10" viewBox="0 0 14 10"><path d="M2.2 2.4 L6.9 7.1 L11.6 2.4" fill="none" stroke="#666" stroke-width="1.55"/></svg>
<div class="circ" style="left:74.0px;top:595.98px;background:#f59b00">B</div>
<div class="tt" style="left:100.3px;top:597.20px;width:127.0px">Risk Provision&nbsp; (1)</div>
<div class="dots" style="top:602.68px"><i style="background:#555"></i><i style="background:#555"></i><i style="background:#555"></i></div>
<div class="num fc tr" style="top:596.98px">137,000.<span class="el">…</span></div>
<div class="num un" style="top:596.98px;color:#b5b5b5">0.00</div>
<div class="num pv z" style="left:483px;top:596.98px">0.00</div>
<div class="num pv z" style="left:563px;top:596.98px">0.00</div>
<div class="num pv z" style="left:643px;top:596.98px">0.00</div>
<div class="num pv z" style="left:723px;top:596.98px">0.00</div>
<div class="num pv z" style="left:803px;top:596.98px">0.00</div>
<div class="num pv z" style="left:883px;top:596.98px">0.00</div>
<div class="num pv z" style="left:963px;top:596.98px">0.00</div>
<div class="num pv z" style="left:1043px;top:596.98px">0.00</div>
<div class="num pv z" style="left:1123px;top:596.98px">0.00</div>
<div class="num pv z" style="left:1203px;top:596.98px">0.00</div>
<div class="num pv z" style="left:1283px;top:596.98px">0.00</div>
<div class="num pv z" style="left:1363px;top:596.98px">0.00</div>
<div class="num fv z" style="left:1443px;top:596.98px">0.00</div>
<div class="num fv z" style="left:1523px;top:596.98px">0.00</div>
<div class="num fv z" style="left:1603px;top:596.98px">0.00</div>
<div class="num fv" style="left:1683px;top:596.98px">9,647.89</div>
<div class="num fv" style="left:1763px;top:596.98px">9,647.89</div>
<div class="num fv" style="left:1843px;top:596.98px">11,577.89</div>
<div class="r even" style="top:619.28px;height:28.76px"><b class="g"></b><b class="ov"></b></div>
<div class="obar" style="top:618.28px;height:29.76px"></div>
<svg class="a" style="left:74.0px;top:629.03px" width="14" height="10" viewBox="0 0 14 10"><path d="M2.2 2.4 L6.9 7.1 L11.6 2.4" fill="none" stroke="#666" stroke-width="1.55"/></svg>
<div class="circ" style="left:94.0px;top:624.74px;background:#9271cc">F</div>
<div class="tt" style="left:119.8px;top:625.95px;width:107.5px">Forecasts&nbsp; (8)</div>
<div class="num fc tr" style="top:625.73px">137,000.<span class="el">…</span></div>
<div class="num pv z" style="left:483px;top:625.73px">0.00</div>
<div class="num pv z" style="left:563px;top:625.73px">0.00</div>
<div class="num pv z" style="left:643px;top:625.73px">0.00</div>
<div class="num pv z" style="left:723px;top:625.73px">0.00</div>
<div class="num pv z" style="left:803px;top:625.73px">0.00</div>
<div class="num pv z" style="left:883px;top:625.73px">0.00</div>
<div class="num pv z" style="left:963px;top:625.73px">0.00</div>
<div class="num pv z" style="left:1043px;top:625.73px">0.00</div>
<div class="num pv z" style="left:1123px;top:625.73px">0.00</div>
<div class="num pv z" style="left:1203px;top:625.73px">0.00</div>
<div class="num pv z" style="left:1283px;top:625.73px">0.00</div>
<div class="num pv z" style="left:1363px;top:625.73px">0.00</div>
<div class="r odd" style="top:648.03px;height:28.76px"><b class="g"></b><b class="ov"></b></div>
<div class="obar" style="top:647.03px;height:29.76px"></div>
<div class="sq" style="left:113px;top:655.49px"></div>
<div class="tt" style="left:134.7px;top:654.71px;width:92.6px">Injuries Onsite</div>
<div class="dots" style="top:660.19px"><i style="background:#c6c6c6"></i><i style="background:#c6c6c6"></i><i style="background:#c6c6c6"></i></div>
<div class="num fc" style="top:654.49px">60,000.00</div>
<div class="num pv z" style="left:483px;top:654.49px">0.00</div>
<div class="num pv z" style="left:563px;top:654.49px">0.00</div>
<div class="num pv z" style="left:643px;top:654.49px">0.00</div>
<div class="num pv z" style="left:723px;top:654.49px">0.00</div>
<div class="num pv z" style="left:803px;top:654.49px">0.00</div>
<div class="num pv z" style="left:883px;top:654.49px">0.00</div>
<div class="num pv z" style="left:963px;top:654.49px">0.00</div>
<div class="num pv z" style="left:1043px;top:654.49px">0.00</div>
<div class="num pv z" style="left:1123px;top:654.49px">0.00</div>
<div class="num pv z" style="left:1203px;top:654.49px">0.00</div>
<div class="num pv z" style="left:1283px;top:654.49px">0.00</div>
<div class="num pv z" style="left:1363px;top:654.49px">0.00</div>
<div class="r even" style="top:676.79px;height:28.76px"><b class="g"></b><b class="ov"></b></div>
<div class="obar" style="top:675.79px;height:29.76px"></div>
<div class="sq" style="left:113px;top:684.25px"></div>
<div class="tt" style="left:134.7px;top:683.47px;width:92.6px">Design Changes</div>
<div class="dots" style="top:688.95px"><i style="background:#c6c6c6"></i><i style="background:#c6c6c6"></i><i style="background:#c6c6c6"></i></div>
<div class="num fc" style="top:683.25px">10,000.00</div>
<div class="num pv z" style="left:483px;top:683.25px">0.00</div>
<div class="num pv z" style="left:563px;top:683.25px">0.00</div>
<div class="num pv z" style="left:643px;top:683.25px">0.00</div>
<div class="num pv z" style="left:723px;top:683.25px">0.00</div>
<div class="num pv z" style="left:803px;top:683.25px">0.00</div>
<div class="num pv z" style="left:883px;top:683.25px">0.00</div>
<div class="num pv z" style="left:963px;top:683.25px">0.00</div>
<div class="num pv z" style="left:1043px;top:683.25px">0.00</div>
<div class="num pv z" style="left:1123px;top:683.25px">0.00</div>
<div class="num pv z" style="left:1203px;top:683.25px">0.00</div>
<div class="num pv z" style="left:1283px;top:683.25px">0.00</div>
<div class="num pv z" style="left:1363px;top:683.25px">0.00</div>
<div class="r odd" style="top:705.55px;height:28.76px"><b class="g"></b><b class="ov"></b></div>
<div class="obar" style="top:704.55px;height:29.76px"></div>
<div class="sq" style="left:113px;top:713.01px"></div>
<div class="tt" style="left:134.7px;top:712.23px;width:92.6px">Contractor issue</div>
<div class="dots" style="top:717.71px"><i style="background:#c6c6c6"></i><i style="background:#c6c6c6"></i><i style="background:#c6c6c6"></i></div>
<div class="num fc" style="top:712.01px">1,000.00</div>
<div class="num pv z" style="left:483px;top:712.01px">0.00</div>
<div class="num pv z" style="left:563px;top:712.01px">0.00</div>
<div class="num pv z" style="left:643px;top:712.01px">0.00</div>
<div class="num pv z" style="left:723px;top:712.01px">0.00</div>
<div class="num pv z" style="left:803px;top:712.01px">0.00</div>
<div class="num pv z" style="left:883px;top:712.01px">0.00</div>
<div class="num pv z" style="left:963px;top:712.01px">0.00</div>
<div class="num pv z" style="left:1043px;top:712.01px">0.00</div>
<div class="num pv z" style="left:1123px;top:712.01px">0.00</div>
<div class="num pv z" style="left:1203px;top:712.01px">0.00</div>
<div class="num pv z" style="left:1283px;top:712.01px">0.00</div>
<div class="num pv z" style="left:1363px;top:712.01px">0.00</div>
<div class="r even" style="top:734.31px;height:28.76px"><b class="g"></b><b class="ov"></b></div>
<div class="obar" style="top:733.31px;height:29.76px"></div>
<div class="sq" style="left:113px;top:741.76px"></div>
<div class="tt" style="left:134.7px;top:740.98px;width:92.6px">Design flaws</div>
<div class="dots" style="top:746.46px"><i style="background:#c6c6c6"></i><i style="background:#c6c6c6"></i><i style="background:#c6c6c6"></i></div>
<div class="num fc" style="top:740.76px">2,000.00</div>
<div class="num pv z" style="left:483px;top:740.76px">0.00</div>
<div class="num pv z" style="left:563px;top:740.76px">0.00</div>
<div class="num pv z" style="left:643px;top:740.76px">0.00</div>
<div class="num pv z" style="left:723px;top:740.76px">0.00</div>
<div class="num pv z" style="left:803px;top:740.76px">0.00</div>
<div class="num pv z" style="left:883px;top:740.76px">0.00</div>
<div class="num pv z" style="left:963px;top:740.76px">0.00</div>
<div class="num pv z" style="left:1043px;top:740.76px">0.00</div>
<div class="num pv z" style="left:1123px;top:740.76px">0.00</div>
<div class="num pv z" style="left:1203px;top:740.76px">0.00</div>
<div class="num pv z" style="left:1283px;top:740.76px">0.00</div>
<div class="num pv z" style="left:1363px;top:740.76px">0.00</div>
<div class="r odd" style="top:763.06px;height:28.76px"><b class="g"></b><b class="ov"></b></div>
<div class="obar" style="top:762.06px;height:29.76px"></div>
<div class="sq" style="left:113px;top:770.52px"></div>
<div class="tt" style="left:134.7px;top:769.74px;width:92.6px">Client directed cha</div>
<div class="dots" style="top:775.22px"><i style="background:#c6c6c6"></i><i style="background:#c6c6c6"></i><i style="background:#c6c6c6"></i></div>
<div class="num fc" style="top:769.52px">2,000.00</div>
<div class="num pv z" style="left:483px;top:769.52px">0.00</div>
<div class="num pv z" style="left:563px;top:769.52px">0.00</div>
<div class="num pv z" style="left:643px;top:769.52px">0.00</div>
<div class="num pv z" style="left:723px;top:769.52px">0.00</div>
<div class="num pv z" style="left:803px;top:769.52px">0.00</div>
<div class="num pv z" style="left:883px;top:769.52px">0.00</div>
<div class="num pv z" style="left:963px;top:769.52px">0.00</div>
<div class="num pv z" style="left:1043px;top:769.52px">0.00</div>
<div class="num pv z" style="left:1123px;top:769.52px">0.00</div>
<div class="num pv z" style="left:1203px;top:769.52px">0.00</div>
<div class="num pv z" style="left:1283px;top:769.52px">0.00</div>
<div class="num pv z" style="left:1363px;top:769.52px">0.00</div>
<div class="r even" style="top:791.82px;height:28.76px"><b class="g"></b><b class="ov"></b></div>
<div class="obar" style="top:790.82px;height:29.76px"></div>
<div class="sq" style="left:113px;top:799.28px"></div>
<div class="tt" style="left:134.7px;top:798.50px;width:92.6px">Additional Concret</div>
<div class="dots" style="top:803.98px"><i style="background:#c6c6c6"></i><i style="background:#c6c6c6"></i><i style="background:#c6c6c6"></i></div>
<div class="num fc" style="top:798.28px">50,000.00</div>
<div class="num pv z" style="left:483px;top:798.28px">0.00</div>
<div class="num pv z" style="left:563px;top:798.28px">0.00</div>
<div class="num pv z" style="left:643px;top:798.28px">0.00</div>
<div class="num pv z" style="left:723px;top:798.28px">0.00</div>
<div class="num pv z" style="left:803px;top:798.28px">0.00</div>
<div class="num pv z" style="left:883px;top:798.28px">0.00</div>
<div class="num pv z" style="left:963px;top:798.28px">0.00</div>
<div class="num pv z" style="left:1043px;top:798.28px">0.00</div>
<div class="num pv z" style="left:1123px;top:798.28px">0.00</div>
<div class="num pv z" style="left:1203px;top:798.28px">0.00</div>
<div class="num pv z" style="left:1283px;top:798.28px">0.00</div>
<div class="num pv z" style="left:1363px;top:798.28px">0.00</div>
<div class="r odd" style="top:820.58px;height:28.76px"><b class="g"></b><b class="ov"></b></div>
<div class="obar" style="top:819.58px;height:29.76px"></div>
<div class="sq" style="left:113px;top:828.03px"></div>
<div class="tt" style="left:134.7px;top:827.25px;width:92.6px">Contamination</div>
<div class="dots" style="top:832.73px"><i style="background:#c6c6c6"></i><i style="background:#c6c6c6"></i><i style="background:#c6c6c6"></i></div>
<div class="num fc" style="top:827.03px">2,000.00</div>
<div class="num pv z" style="left:483px;top:827.03px">0.00</div>
<div class="num pv z" style="left:563px;top:827.03px">0.00</div>
<div class="num pv z" style="left:643px;top:827.03px">0.00</div>
<div class="num pv z" style="left:723px;top:827.03px">0.00</div>
<div class="num pv z" style="left:803px;top:827.03px">0.00</div>
<div class="num pv z" style="left:883px;top:827.03px">0.00</div>
<div class="num pv z" style="left:963px;top:827.03px">0.00</div>
<div class="num pv z" style="left:1043px;top:827.03px">0.00</div>
<div class="num pv z" style="left:1123px;top:827.03px">0.00</div>
<div class="num pv z" style="left:1203px;top:827.03px">0.00</div>
<div class="num pv z" style="left:1283px;top:827.03px">0.00</div>
<div class="num pv z" style="left:1363px;top:827.03px">0.00</div>
<div class="r even" style="top:849.33px;height:28.76px"><b class="g"></b><b class="ov"></b></div>
<div class="obar" style="top:848.33px;height:29.76px"></div>
<div class="sq" style="left:113px;top:856.79px"></div>
<div class="tt" style="left:134.7px;top:856.01px;width:92.6px">COVID-19</div>
<div class="dots" style="top:861.49px"><i style="background:#c6c6c6"></i><i style="background:#c6c6c6"></i><i style="background:#c6c6c6"></i></div>
<div class="num fc" style="top:855.79px">10,000.00</div>
<div class="num pv z" style="left:483px;top:855.79px">0.00</div>
<div class="num pv z" style="left:563px;top:855.79px">0.00</div>
<div class="num pv z" style="left:643px;top:855.79px">0.00</div>
<div class="num pv z" style="left:723px;top:855.79px">0.00</div>
<div class="num pv z" style="left:803px;top:855.79px">0.00</div>
<div class="num pv z" style="left:883px;top:855.79px">0.00</div>
<div class="num pv z" style="left:963px;top:855.79px">0.00</div>
<div class="num pv z" style="left:1043px;top:855.79px">0.00</div>
<div class="num pv z" style="left:1123px;top:855.79px">0.00</div>
<div class="num pv z" style="left:1203px;top:855.79px">0.00</div>
<div class="num pv z" style="left:1283px;top:855.79px">0.00</div>
<div class="num pv z" style="left:1363px;top:855.79px">0.00</div>
</div>
<div class="abs" style="left:19px;top:937px;width:1882px;height:16px;background:#f1f1f1"></div>
<svg class="abs" style="left:24px;top:941px" width="6" height="9" viewBox="0 0 6 9"><path d="M5 0.8 L0.9 4.5 L5 8.2 Z" fill="#a3a3a3"/></svg>
<div class="abs" style="left:36px;top:939px;width:1367px;height:13px;background:#c1c1c1"></div>
<svg class="abs" style="left:1890px;top:941px" width="6" height="9" viewBox="0 0 6 9"><path d="M0.9 0.8 L5.1 4.5 L0.9 8.2 Z" fill="#505050"/></svg>
</body></html>
